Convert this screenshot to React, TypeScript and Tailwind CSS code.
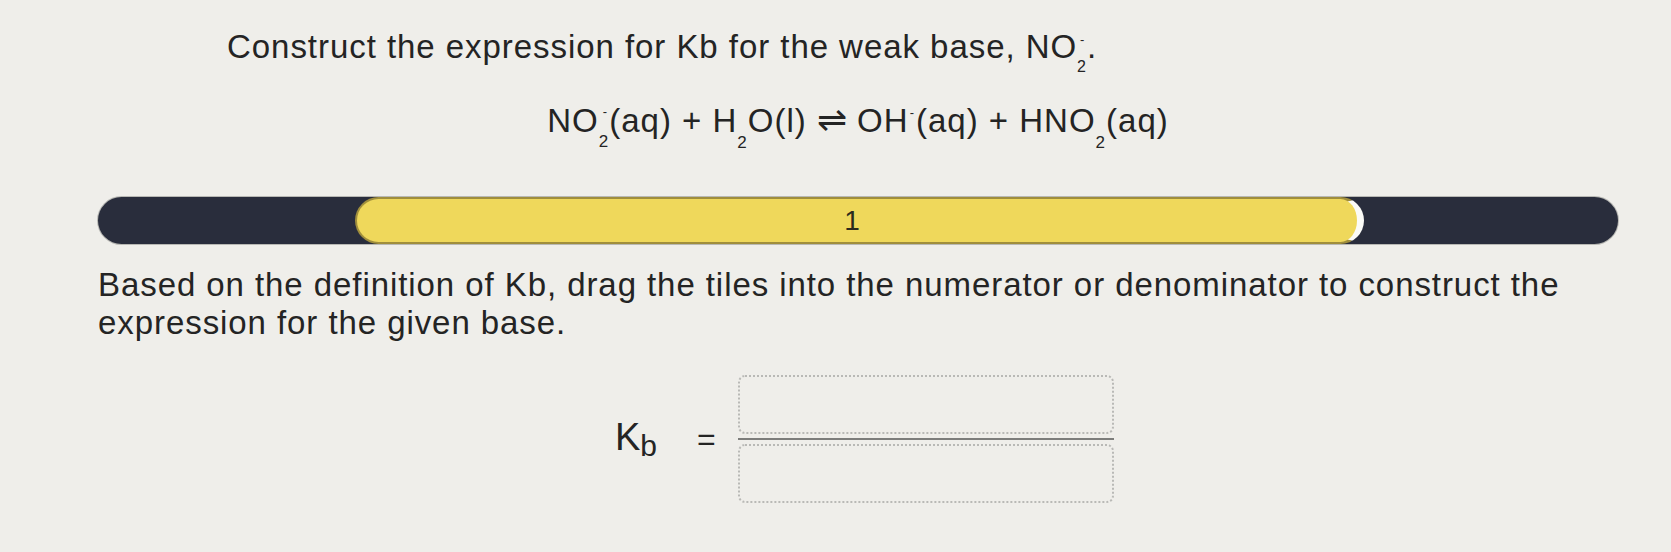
import React from "react";

// stacked charge over subscript, e.g. NO₂⁻
function Ion({ sub, charge, size }: { sub: string; charge: string; size: "title" | "eq" }) {
  const box =
    size === "title"
      ? "inline-flex flex-col gap-[11px] align-[14px] text-[16px] leading-none"
      : "inline-flex flex-col gap-[13px] align-[16px] text-[17px] leading-none";
  return (
    <span className={box}>
      <span className="text-[13px] leading-[16px] pl-[3px]">{charge}</span>
      <span>{sub}</span>
    </span>
  );
}

function Sub({ children }: { children: React.ReactNode }) {
  return <span className="text-[17px] leading-none align-[-16px]">{children}</span>;
}

function Sup({ children }: { children: React.ReactNode }) {
  return <span className="text-[13px] leading-none align-[15px] px-[1px]">{children}</span>;
}

function DropZone() {
  return <div className="h-[59px] rounded-[7px] border-2 border-dotted border-[#b9b9b6]" />;
}

export default function App() {
  return (
    <div className="min-h-[552px] w-full bg-[#efeeea] text-[#242424] font-['Liberation_Sans',Arial,sans-serif] pt-[28px] pl-[98px] pr-[53px]">
      <p className="ml-[129px] text-[33px] leading-[38px] tracking-[0.95px]">
        Construct the expression for Kb for the weak base, NO
        <Ion sub="2" charge="-" size="title" />.
      </p>

      <p className="mt-[26px] text-center text-[33px] leading-[38px] tracking-[1px] whitespace-nowrap">
        NO<Ion sub="2" charge="-" size="eq" />(aq) + H<Sub>2</Sub>O(l){" "}
        <span className="font-['DejaVu_Sans',sans-serif] text-[36px] font-light tracking-normal">⇌</span> OH
        <Sup>-</Sup>(aq) + HNO<Sub>2</Sub>(aq)
      </p>

      <div className="mt-[46px] h-[47px] rounded-full bg-[#292d3c] flex pl-[257px] pr-[254px] shadow-[0_0_0_1px_#b8b8b4]">
        <div className="flex-1 rounded-full bg-[#efd85b] border-2 border-[#a08e3c] border-r-[7px] border-r-[#fbfbf7] flex items-center justify-center pr-[10px] text-[28px] text-[#2c2a1c]">
          1
        </div>
      </div>

      <p className="mt-[22px] text-[33px] leading-[38px] tracking-[0.93px]">
        Based on the definition of Kb, drag the tiles into the numerator or denominator to construct the
        expression for the given base.
      </p>

      <div className="mt-[33px] ml-[517px] flex items-center">
        <span className="w-[82px] text-[38px] leading-none">
          K<span className="text-[30px] align-[-6px]">b</span>
        </span>
        <span className="w-[41px] text-[32px] leading-none">=</span>
        <div className="w-[376px] flex flex-col">
          <DropZone />
          <div className="mt-[4px] h-[2px] bg-[#7d7d7b]" />
          <div className="mt-[4px]">
            <DropZone />
          </div>
        </div>
      </div>
    </div>
  );
}
